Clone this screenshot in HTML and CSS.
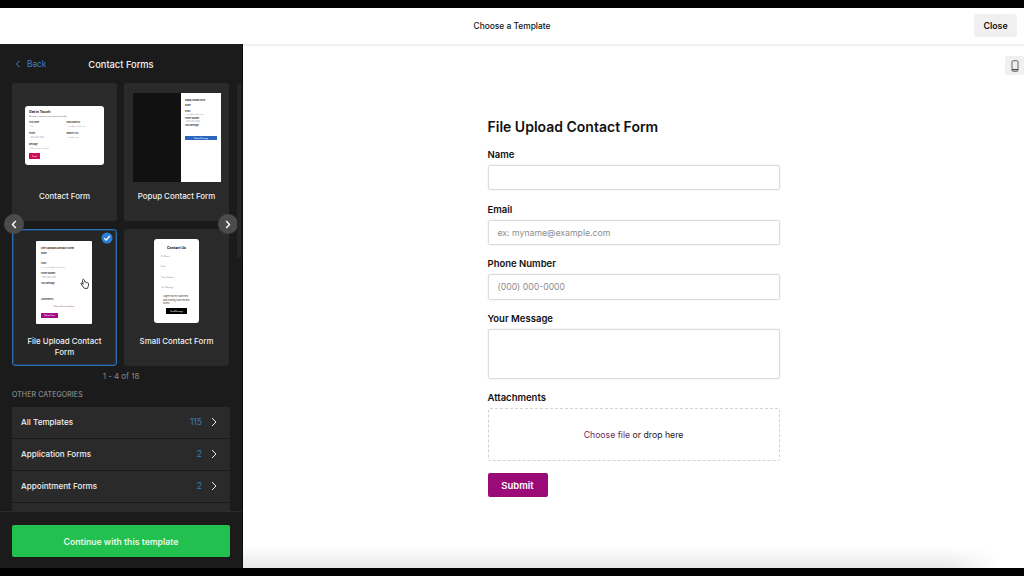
FILE: index.html
```html
<!DOCTYPE html>
<html lang="en">
<head>
    <meta charset="UTF-8">
    <meta name="viewport" content="width=device-width, initial-scale=1.0">
    <title>Choose a Template</title>
    <link rel="stylesheet" href="styles.css">
</head>
<body>
    <div class="app">
        <header class="topbar">
            <div class="topbar-title">Choose a Template</div>
            <button class="close-btn">Close</button>
        </header>
        <div class="content">
            <aside class="sidebar">
                <div class="side-head">
                    <a class="back">
                        <svg width="6" height="8" viewBox="0 0 6 8"><path d="M4.5 .8 1.5 4l3 3.2" fill="none" stroke="#3f7fc4" stroke-width="1"/></svg>
                        Back
                    </a>
                    <div class="side-title">Contact Forms</div>
                </div>
                <div class="side-scroll">
                    <div class="cards">
                        <div class="card">
                            <div class="thumb-area">
                                <div class="thumb thumb-wide">
                                    <div class="t-head">Get in Touch</div>
                                    <div class="t-sub">Questions, inquiries or just want to say hello</div>
                                    <div class="t-cols">
                                        <div><div class="t-label">First name</div><div class="t-ph">First</div></div>
                                        <div><div class="t-label">Email address</div><div class="t-ph">name@example.com</div></div>
                                        <div><div class="t-label">Phone</div><div class="t-ph">(000) 000-0000</div></div>
                                        <div><div class="t-label">Website URL</div><div class="t-ph">example.com</div></div>
                                    </div>
                                    <div class="t-label">Message</div>
                                    <div class="t-ph">Tell us what you need</div>
                                    <div class="t-btn t-btn-red">Send</div>
                                </div>
                            </div>
                            <div class="card-name">Contact Form</div>
                        </div>
                        <div class="card">
                            <div class="popup-area">
                                <div class="popup-dark"></div>
                                <div class="popup-panel">
                                    <div class="t-head t-small">Popup Contact Form</div>
                                    <div class="t-label t-gap">Name</div>
                                    <div class="t-label">Email</div>
                                    <div class="t-ph">name@example.com</div>
                                    <div class="t-label">Phone Number</div>
                                    <div class="t-ph">(000) 000-0000</div>
                                    <div class="t-label">Your Message</div>
                                    <div class="t-btn t-btn-blue">Submit Message</div>
                                </div>
                            </div>
                            <div class="card-name">Popup Contact Form</div>
                        </div>
                        <div class="card card-active">
                            <div class="thumb-area thumb-area-tall">
                                <div class="thumb thumb-file">
                                    <div class="t-head t-small">File Upload Contact Form</div>
                                    <div class="t-label">Name</div>
                                    <div class="t-line"></div>
                                    <div class="t-label">Email</div>
                                    <div class="t-ph">ex: myname@example.com</div>
                                    <div class="t-label">Phone Number</div>
                                    <div class="t-ph">(000) 000-0000</div>
                                    <div class="t-label">Your Message</div>
                                    <div class="t-space"></div>
                                    <div class="t-label">Attachments</div>
                                    <div class="t-drop">Choose file or drop here</div>
                                    <div class="t-btn t-btn-purple">Submit Form</div>
                                </div>
                            </div>
                            <div class="card-name">File Upload Contact Form</div>
                            <svg class="check" width="12" height="12" viewBox="0 0 12 12"><circle cx="6" cy="6" r="5.5" fill="#2f7fd8"/><path d="M3.2 6.2 5.2 8l3.6-4" fill="none" stroke="#fff" stroke-width="1.3"/></svg>
                            <svg class="hand" width="10" height="12" viewBox="0 0 12 14"><path d="M3.4 1.6c.8-.5 1.4 0 1.7.8l1 2.5c.6-.4 1.3-.3 1.600.3.600-.3 1.200-.1 1.400.4.600-.1 1 .3 1.100.9.200 1.400 0 3.200-.8 4.500l-.4 1.200H5.200L2.800 9.200 1.200 6.900c-.4-.7.300-1.300.9-1l1.700 1.400L3 2.900c-.1-.5 0-1 .4-1.300Z" fill="#fff" stroke="#111" stroke-width="1" stroke-linejoin="round"/></svg>
                        </div>
                        <div class="card">
                            <div class="thumb-area thumb-area-tall">
                                <div class="thumb thumb-small">
                                    <div class="t-head t-center">Contact Us</div>
                                    <div class="t-ph t-bare">Full Name</div>
                                    <div class="t-ph t-bare">Email</div>
                                    <div class="t-ph t-bare">Phone Number</div>
                                    <div class="t-ph t-bare">Your Message</div>
                                    <div class="t-agree">I agree that my submitted data is being collected and stored.</div>
                                    <div class="t-btn t-btn-black">Send Message</div>
                                </div>
                            </div>
                            <div class="card-name">Small Contact Form</div>
                        </div>
                        <button class="arrow arrow-left">
                            <svg width="6" height="9" viewBox="0 0 6 9"><path d="M4.800 1 1.500 4.500 4.800 8" fill="none" stroke="#fff" stroke-width="1.400"/></svg>
                        </button>
                        <button class="arrow arrow-right">
                            <svg width="6" height="9" viewBox="0 0 6 9"><path d="M1.200 1 4.500 4.500 1.200 8" fill="none" stroke="#fff" stroke-width="1.400"/></svg>
                        </button>
                    </div>
                    <div class="pager">1 - 4 of 18</div>
                    <div class="cat-title">OTHER CATEGORIES</div>
                    <div class="cat-list">
                        <div class="cat-row">
                            <span class="cat-name">All Templates</span>
                            <span class="cat-count">115</span>
                            <svg width="6" height="10" viewBox="0 0 6 10"><path d="M1 1l4 4-4 4" fill="none" stroke="#e8e8e8" stroke-width="1"/></svg>
                        </div>
                        <div class="cat-row">
                            <span class="cat-name">Application Forms</span>
                            <span class="cat-count">2</span>
                            <svg width="6" height="10" viewBox="0 0 6 10"><path d="M1 1l4 4-4 4" fill="none" stroke="#e8e8e8" stroke-width="1"/></svg>
                        </div>
                        <div class="cat-row">
                            <span class="cat-name">Appointment Forms</span>
                            <span class="cat-count">2</span>
                            <svg width="6" height="10" viewBox="0 0 6 10"><path d="M1 1l4 4-4 4" fill="none" stroke="#e8e8e8" stroke-width="1"/></svg>
                        </div>
                        <div class="cat-row"></div>
                    </div>
                </div>
                <div class="scroll-thumb"></div>
                <div class="side-foot">
                    <button class="continue-btn">Continue with this template</button>
                </div>
            </aside>
            <main class="preview">
                <button class="device-btn">
                    <svg width="8" height="12" viewBox="0 0 8 12"><rect x="1" y=".7" width="6" height="10.600" rx="1.200" fill="none" stroke="#444" stroke-width=".8"/><path d="M1 9.600h6" stroke="#444" stroke-width="1.200"/></svg>
                </button>
                <form class="form">
                    <h1 class="form-title">File Upload Contact Form</h1>
                    <div class="field">
                        <label class="field-label">Name</label>
                        <div class="input"></div>
                    </div>
                    <div class="field">
                        <label class="field-label">Email</label>
                        <div class="input">ex: myname@example.com</div>
                    </div>
                    <div class="field">
                        <label class="field-label">Phone Number</label>
                        <div class="input">(000) 000-0000</div>
                    </div>
                    <div class="field">
                        <label class="field-label">Your Message</label>
                        <div class="input input-area"></div>
                    </div>
                    <div class="field">
                        <label class="field-label">Attachments</label>
                        <div class="dropzone"><span class="choose">Choose file</span>&nbsp;or drop here</div>
                    </div>
                    <div class="submit-btn">Submit</div>
                </form>
                <div class="bottom-fade"></div>
            </main>
        </div>
    </div>
</body>
</html>
```
FILE: styles.css
```css
* {
    box-sizing: border-box;
}
body, html {
    margin: 0;
    padding: 0;
    height: 100%;
    overflow: hidden;
    background-color: #000;
    font-family: Inter, "Liberation Sans", sans-serif;
}
button {
    font-family: inherit;
    border: none;
    padding: 0;
}
.app {
    height: 576px;
    padding: 8px 0;
    display: flex;
    flex-direction: column;
}

/* top bar */
.topbar {
    height: 36px;
    flex: none;
    display: flex;
    align-items: center;
    justify-content: flex-end;
    padding: 0 7px 1px 0;
    position: relative;
    z-index: 5;
    background-color: #fff;
    box-shadow: 0 1px 3px rgba(0, 0, 0, 0.12);
}
.topbar-title {
    position: absolute;
    left: 0;
    right: 0;
    padding-top: 1px;
    text-align: center;
    font-size: 8.400px;
    font-weight: 500;
    color: #111;
}
.close-btn {
    width: 43px;
    height: 23px;
    border-radius: 3px;
    background-color: #f0f0f0;
    color: #111;
    font-size: 8.800px;
    font-weight: 600;
}
.content {
    flex: 1;
    min-height: 0;
    display: flex;
}

/* sidebar */
.sidebar {
    width: 243px;
    flex: none;
    display: flex;
    flex-direction: column;
    background-color: #1b1b1b;
    border-right: 1px solid #0c0c0c;
    position: relative;
    z-index: 6;
}
.side-head {
    height: 39px;
    flex: none;
    display: flex;
    align-items: center;
    position: relative;
    padding: 1px 0 0 15px;
}
.back {
    display: flex;
    align-items: center;
    gap: 6px;
    font-size: 8.300px;
    color: #3f7fc4;
}
.side-title {
    position: absolute;
    left: 0;
    width: 242px;
    text-align: center;
    font-size: 9.300px;
    font-weight: 500;
    color: #f2f2f2;
}
.side-scroll {
    flex: 1;
    min-height: 0;
    overflow: hidden;
    padding: 0 12px;
}
.scroll-thumb {
    position: absolute;
    top: 39px;
    left: 237px;
    width: 4px;
    height: 175px;
    border-radius: 2px;
    background-color: #262626;
}
.cards {
    display: grid;
    grid-template-columns: 105px 105px;
    grid-template-rows: 138px 137px;
    gap: 8px 7px;
    position: relative;
}
.card {
    background-color: #2a2a2a;
    border-radius: 3px;
    position: relative;
    overflow: hidden;
}
.card-active {
    border: 1px solid #2e6fb0;
    box-shadow: inset 0 0 0 1px #1c3f63;
    background-color: #262626;
    overflow: visible;
}
.card-name {
    font-size: 7.900px;
    line-height: 11px;
    font-weight: 500;
    color: #f0f0f0;
    text-align: center;
    padding: 0 8px;
}

/* template thumbnails */
.thumb-area {
    height: 108px;
    display: flex;
    align-items: center;
    justify-content: center;
    padding-bottom: 4px;
}
.thumb-area-tall {
    height: 107px;
    align-items: flex-start;
    padding: 10px 0 0;
}
.card-active .thumb-area-tall {
    height: 106px;
    padding: 11px 1px 0 0;
}
.thumb {
    background-color: #fff;
    color: #222;
    overflow: hidden;
    border-radius: 3px;
    flex: none;
}
.thumb-wide {
    width: 79px;
    height: 59px;
    padding: 4px 4px;
}
.thumb-file {
    width: 56px;
    height: 83px;
    padding: 5px 5px;
    border-radius: 1px;
}
.thumb-small {
    width: 45px;
    height: 84px;
    padding: 7px 6px;
}
.t-head {
    font-size: 3.500px;
    line-height: 5px;
    font-weight: 700;
    color: #111;
    white-space: nowrap;
}
.t-small {
    font-size: 2.700px;
    line-height: 5px;
}
.t-center {
    text-align: center;
    font-size: 3.500px;
    margin-bottom: 3px;
}
.t-sub {
    font-size: 1.800px;
    line-height: 3px;
    color: #555;
    white-space: nowrap;
    margin-bottom: 2px;
}
.t-cols {
    display: grid;
    grid-template-columns: 1fr 1fr;
    gap: 0 4px;
}
.t-label {
    font-size: 2px;
    line-height: 3px;
    font-weight: 600;
    color: #222;
    white-space: nowrap;
    margin-top: 1px;
}
.t-gap {
    margin-bottom: 3px;
}
.t-ph {
    font-size: 1.800px;
    line-height: 4px;
    color: #aaa;
    padding-left: 1px;
    margin-bottom: 3px;
    white-space: nowrap;
}
.t-bare {
    margin-bottom: 6.300px;
    color: #888;
}
.t-line {
    height: 6px;
}
.t-space {
    height: 12px;
}
.t-drop {
    font-size: 1.800px;
    line-height: 6px;
    color: #8a3a7a;
    text-align: center;
    margin: 2px 0 4px;
}
.t-agree {
    font-size: 2.100px;
    line-height: 3.400px;
    color: #333;
    padding: 0 4px 0 3px;
    margin: 3px -2px 3px 0;
}
.t-btn {
    font-size: 1.800px;
    line-height: 4px;
    color: #fff;
    text-align: center;
    white-space: nowrap;
}
.t-btn-red {
    width: 11px;
    margin-top: 1px;
    line-height: 6px;
    background-color: #d00d55;
}
.t-btn-blue {
    background-color: #2a66c0;
    margin-top: 9px;
}
.t-btn-purple {
    width: 17px;
    line-height: 5px;
    background-color: #a50a8a;
}
.t-btn-black {
    width: 21px;
    margin: 0 auto;
    line-height: 6px;
    background-color: #000;
}
.popup-area {
    display: flex;
    height: 89px;
    margin: 10px 8px 9px 9px;
}
.popup-dark {
    width: 48px;
    background-color: #111;
}
.popup-panel {
    flex: 1;
    padding: 5px 4px;
    background-color: #fff;
    overflow: hidden;
}
.popup-panel .t-small {
    font-size: 2px;
}
.popup-panel .t-ph {
    line-height: 3px;
    margin-bottom: 0;
}
.check {
    position: absolute;
    top: 2px;
    right: 3px;
}
.hand {
    position: absolute;
    left: 67px;
    top: 48px;
}
.arrow {
    position: absolute;
    top: 131px;
    width: 20px;
    height: 20px;
    border-radius: 50%;
    background-color: #4b4b4b;
    display: flex;
    align-items: center;
    justify-content: center;
}
.arrow-left {
    left: -8px;
}
.arrow-right {
    right: -8px;
}
.pager {
    height: 21px;
    line-height: 21px;
    text-align: center;
    font-size: 7.900px;
    color: #8a8a8a;
}
.cat-title {
    font-size: 7px;
    line-height: 10px;
    margin: 3px 0 7px;
    color: #a0a0a0;
    letter-spacing: 0.1px;
}
.cat-list {
    display: flex;
    flex-direction: column;
    gap: 1px;
}
.cat-row {
    height: 31px;
    flex: none;
    display: flex;
    align-items: center;
    padding: 0 13px 1px 9px;
    background-color: #2a2a2a;
}
.cat-name {
    flex: 1;
    font-size: 8.100px;
    font-weight: 500;
    color: #f0f0f0;
}
.cat-count {
    font-size: 8.500px;
    color: #3a7fc0;
    margin-right: 9px;
}
.side-foot {
    height: 57px;
    flex: none;
    padding: 13px 12px 12px;
    background-color: #1b1b1b;
    border-top: 1px solid #2b2b2b;
}
.continue-btn {
    width: 218px;
    height: 32px;
    padding-top: 1px;
    border-radius: 2px;
    background-color: #22c04e;
    color: #e8f8ea;
    font-size: 8.700px;
    font-weight: 600;
}

/* form preview */
.preview {
    flex: 1;
    display: flex;
    justify-content: center;
    position: relative;
    background-color: #fff;
    padding-top: 74px;
}
.device-btn {
    position: absolute;
    top: 12px;
    right: 0;
    width: 19px;
    height: 19px;
    background-color: #f0f0f0;
    border-radius: 2px;
    display: flex;
    align-items: center;
    justify-content: center;
}
.form {
    width: 292px;
    color: #111;
    position: relative;
    z-index: 1;
}
.form-title {
    margin: 0 0 13px;
    font-size: 14px;
    line-height: 18px;
    font-weight: 600;
}
.field {
    margin-bottom: 13.200px;
}
.field-label {
    display: block;
    font-size: 9.500px;
    line-height: 12px;
    font-weight: 600;
    margin-bottom: 4px;
}
.input {
    height: 25.400px;
    border: 1px solid #dcdcdc;
    border-radius: 2px;
    padding: 0 9px;
    font-size: 8.700px;
    line-height: 24.500px;
    color: #8d8d8d;
    box-shadow: 0 0 2px rgba(0, 0, 0, 0.12);
}
.input-area {
    height: 50px;
}
.dropzone {
    height: 53px;
    padding-top: 1px;
    border: 1px dashed #d2d2d2;
    border-radius: 2px;
    display: flex;
    align-items: center;
    justify-content: center;
    font-size: 8.700px;
    color: #222;
}
.choose {
    color: #6b2a62;
}
.submit-btn {
    width: 60px;
    height: 24px;
    margin-top: -1px;
    border-radius: 2px;
    background-color: #9a0b78;
    color: #fff;
    font-size: 9.500px;
    font-weight: 600;
    line-height: 25px;
    text-align: center;
}
.bottom-fade {
    position: absolute;
    left: 0;
    right: 24px;
    bottom: 0;
    height: 21px;
    background: linear-gradient(to bottom, rgba(0, 0, 0, 0), rgba(0, 0, 0, 0.09));
    -webkit-mask-image: linear-gradient(to right, #000 93%, transparent);
    mask-image: linear-gradient(to right, #000 93%, transparent);
}
```
